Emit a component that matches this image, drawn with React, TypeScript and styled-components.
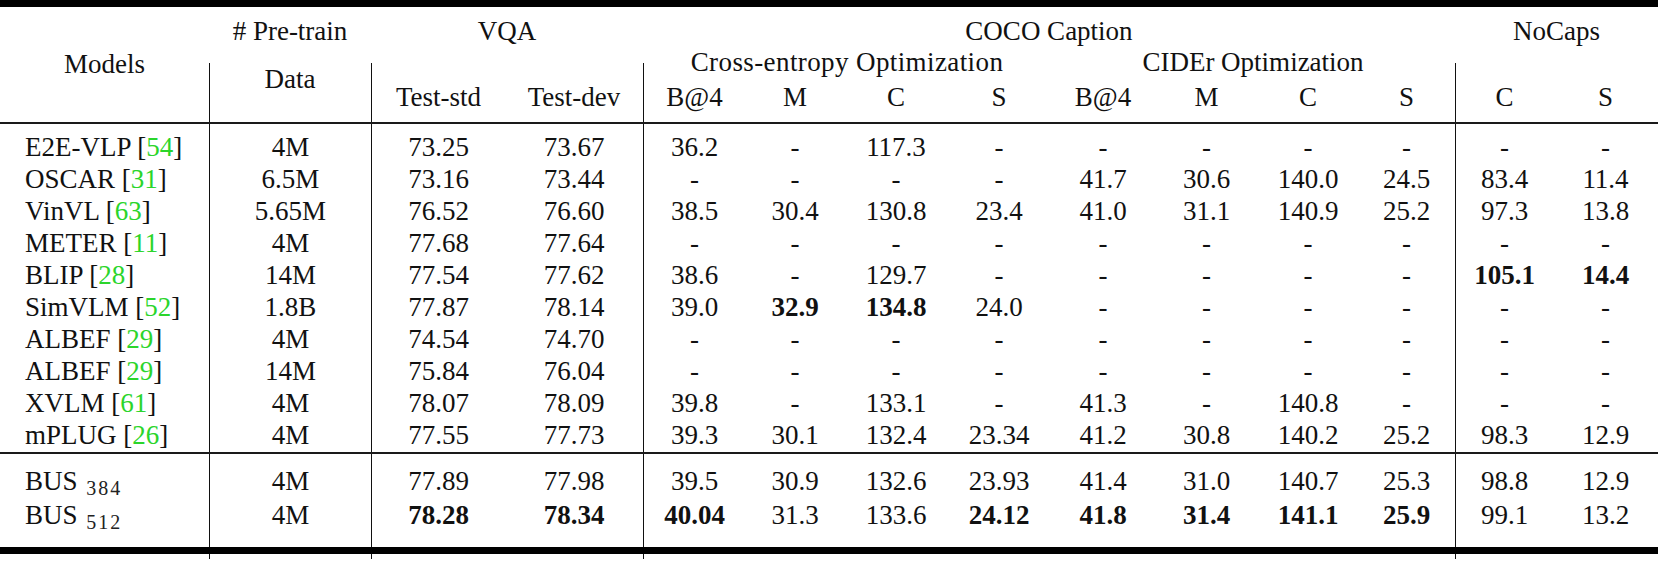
import styled, { createGlobalStyle } from "styled-components";

const GlobalStyle = createGlobalStyle`
  html, body {
    margin: 0;
    padding: 0;
    background: #fff;
  }
  body {
    font-family: "Liberation Serif", "Times New Roman", serif;
    color: #111;
  }
`;

// column widths measured from the reference
const COLS =
  "209px 162px 134px 138px 102px 100px 102px 104px 104px 103px 100px 97px 98px 105px";

// columns that carry a vertical rule on their left edge
const RULED = [1, 2, 4, 12];

const Table = styled.div`
  width: 1658px;
  border-top: 7px solid #000;
  border-bottom: 7px solid #000;
  font-size: 27px;
`;

//header
const Head = styled.div`
  display: grid;
  grid-template-columns: ${COLS};
  grid-template-rows: 40px 31px 44px;
  line-height: 31px;
  border-bottom: 2px solid #1a1a1a;
`;

const HeadCell = styled.div<{
  $col: string;
  $row: string;
  $line?: "part" | "full";
  $pad?: number;
  $mid?: boolean;
  $wide?: boolean;
}>`
  grid-column: ${(p) => p.$col};
  grid-row: ${(p) => p.$row};
  display: flex;
  justify-content: center;
  align-items: ${(p) => (p.$mid ? "center" : "flex-start")};
  padding-top: ${(p) => p.$pad ?? 0}px;
  letter-spacing: ${(p) => (p.$wide ? "0.4px" : "normal")};
  white-space: nowrap;
  ${(p) => p.$line === "full" && "border-left: 1px solid #111;"}
  ${(p) =>
    p.$line === "part" &&
    "background: linear-gradient(#111, #111) no-repeat left bottom / 1px calc(100% - 16px);"}
`;

//body
const Section = styled.div<{ $rule?: boolean }>`
  border-bottom: ${(p) => (p.$rule ? "2px solid #1a1a1a" : "none")};
`;

const Row = styled.div<{ $padTop?: number; $padBottom?: number }>`
  display: grid;
  grid-template-columns: ${COLS};
  line-height: 32px;
  & > div {
    padding-top: ${(p) => p.$padTop ?? 0}px;
    padding-bottom: ${(p) => p.$padBottom ?? 0}px;
  }
`;

const Cell = styled.div<{ $line?: boolean; $bold?: boolean; $name?: boolean }>`
  text-align: ${(p) => (p.$name ? "left" : "center")};
  padding-left: ${(p) => (p.$name ? "25px" : "0")};
  font-weight: ${(p) => (p.$bold ? 700 : 400)};
  border-left: ${(p) => (p.$line ? "1px solid #111" : "none")};
  white-space: nowrap;
`;

const Ref = styled.span`
  color: #2bd52b;
`;

const Sub = styled.span`
  font-size: 20px;
  letter-spacing: 2px;
  margin-left: 2px;
  position: relative;
  top: 5px;
  color: #222;
`;

const Tail = styled.div`
  display: grid;
  grid-template-columns: ${COLS};
  height: 5px;
`;

type Model = { name: string; ref?: string; sub?: string; vals: string[] };

const D = "-";
const dashes = (n: number) => Array(n).fill(D);

const main: Model[] = [
  { name: "E2E-VLP", ref: "54", vals: ["4M", "73.25", "73.67", "36.2", D, "117.3", ...dashes(7)] },
  { name: "OSCAR", ref: "31", vals: ["6.5M", "73.16", "73.44", ...dashes(4), "41.7", "30.6", "140.0", "24.5", "83.4", "11.4"] },
  { name: "VinVL", ref: "63", vals: ["5.65M", "76.52", "76.60", "38.5", "30.4", "130.8", "23.4", "41.0", "31.1", "140.9", "25.2", "97.3", "13.8"] },
  { name: "METER", ref: "11", vals: ["4M", "77.68", "77.64", ...dashes(10)] },
  { name: "BLIP", ref: "28", vals: ["14M", "77.54", "77.62", "38.6", D, "129.7", ...dashes(5), "*105.1", "*14.4"] },
  { name: "SimVLM", ref: "52", vals: ["1.8B", "77.87", "78.14", "39.0", "*32.9", "*134.8", "24.0", ...dashes(6)] },
  { name: "ALBEF", ref: "29", vals: ["4M", "74.54", "74.70", ...dashes(10)] },
  { name: "ALBEF", ref: "29", vals: ["14M", "75.84", "76.04", ...dashes(10)] },
  { name: "XVLM", ref: "61", vals: ["4M", "78.07", "78.09", "39.8", D, "133.1", D, "41.3", D, "140.8", D, D, D] },
  { name: "mPLUG", ref: "26", vals: ["4M", "77.55", "77.73", "39.3", "30.1", "132.4", "23.34", "41.2", "30.8", "140.2", "25.2", "98.3", "12.9"] },
];

const ours: Model[] = [
  { name: "BUS", sub: "384", vals: ["4M", "77.89", "77.98", "39.5", "30.9", "132.6", "23.93", "41.4", "31.0", "140.7", "25.3", "98.8", "12.9"] },
  { name: "BUS", sub: "512", vals: ["4M", "*78.28", "*78.34", "*40.04", "31.3", "133.6", "*24.12", "*41.8", "*31.4", "*141.1", "*25.9", "99.1", "13.2"] },
];

function ModelRow({ m, padTop, padBottom }: { m: Model; padTop?: number; padBottom?: number }) {
  return (
    <Row $padTop={padTop} $padBottom={padBottom}>
      <Cell $name>
        {m.name}{" "}
        {m.ref && (
          <>
            [<Ref>{m.ref}</Ref>]
          </>
        )}
        {m.sub && <Sub>{m.sub}</Sub>}
      </Cell>
      {m.vals.map((v, i) => {
        const bold = v.startsWith("*");
        return (
          <Cell key={i} $line={RULED.includes(i + 1)} $bold={bold}>
            {bold ? v.slice(1) : v}
          </Cell>
        );
      })}
    </Row>
  );
}

function Block({ rows, top, bottom, rule }: { rows: Model[]; top: number; bottom: number; rule?: boolean }) {
  return (
    <Section $rule={rule}>
      {rows.map((m, i) => (
        <ModelRow
          key={i}
          m={m}
          padTop={i === 0 ? top : 0}
          padBottom={i === rows.length - 1 ? bottom : 0}
        />
      ))}
    </Section>
  );
}

const metrics = ["B@4", "M", "C", "S"];

export default function App() {
  return (
    <>
      <GlobalStyle />
      <Table>
        <Head>
          <HeadCell $col="1" $row="1 / 4" $mid>Models</HeadCell>
          <HeadCell $col="2" $row="1" $pad={9}># Pre-train</HeadCell>
          <HeadCell $col="3 / 5" $row="1" $pad={9}>VQA</HeadCell>
          <HeadCell $col="5 / 13" $row="1" $pad={9}>COCO Caption</HeadCell>
          <HeadCell $col="13 / 15" $row="1" $pad={9}>NoCaps</HeadCell>

          <HeadCell $col="2" $row="2 / 4" $line="part" $pad={17}>Data</HeadCell>
          <HeadCell $col="3" $row="2" $line="part" />
          <HeadCell $col="5 / 9" $row="2" $line="part" $wide>Cross-entropy Optimization</HeadCell>
          <HeadCell $col="9 / 13" $row="2">CIDEr Optimization</HeadCell>
          <HeadCell $col="13" $row="2" $line="part" />

          <HeadCell $col="3" $row="3" $line="full" $pad={4}>Test-std</HeadCell>
          <HeadCell $col="4" $row="3" $pad={4}>Test-dev</HeadCell>
          {metrics.map((m, i) => (
            <HeadCell key={"ce" + m} $col={String(5 + i)} $row="3" $line={i === 0 ? "full" : undefined} $pad={4}>
              {m}
            </HeadCell>
          ))}
          {metrics.map((m, i) => (
            <HeadCell key={"cd" + m} $col={String(9 + i)} $row="3" $pad={4}>
              {m}
            </HeadCell>
          ))}
          <HeadCell $col="13" $row="3" $line="full" $pad={4}>C</HeadCell>
          <HeadCell $col="14" $row="3" $pad={4}>S</HeadCell>
        </Head>
        <Block rows={main} top={7} bottom={1} rule />
        <Block rows={ours} top={11} bottom={14} />
      </Table>
      <Tail>
        {Array.from({ length: 14 }, (_, i) => (
          <Cell key={i} $line={RULED.includes(i)} />
        ))}
      </Tail>
    </>
  );
}
